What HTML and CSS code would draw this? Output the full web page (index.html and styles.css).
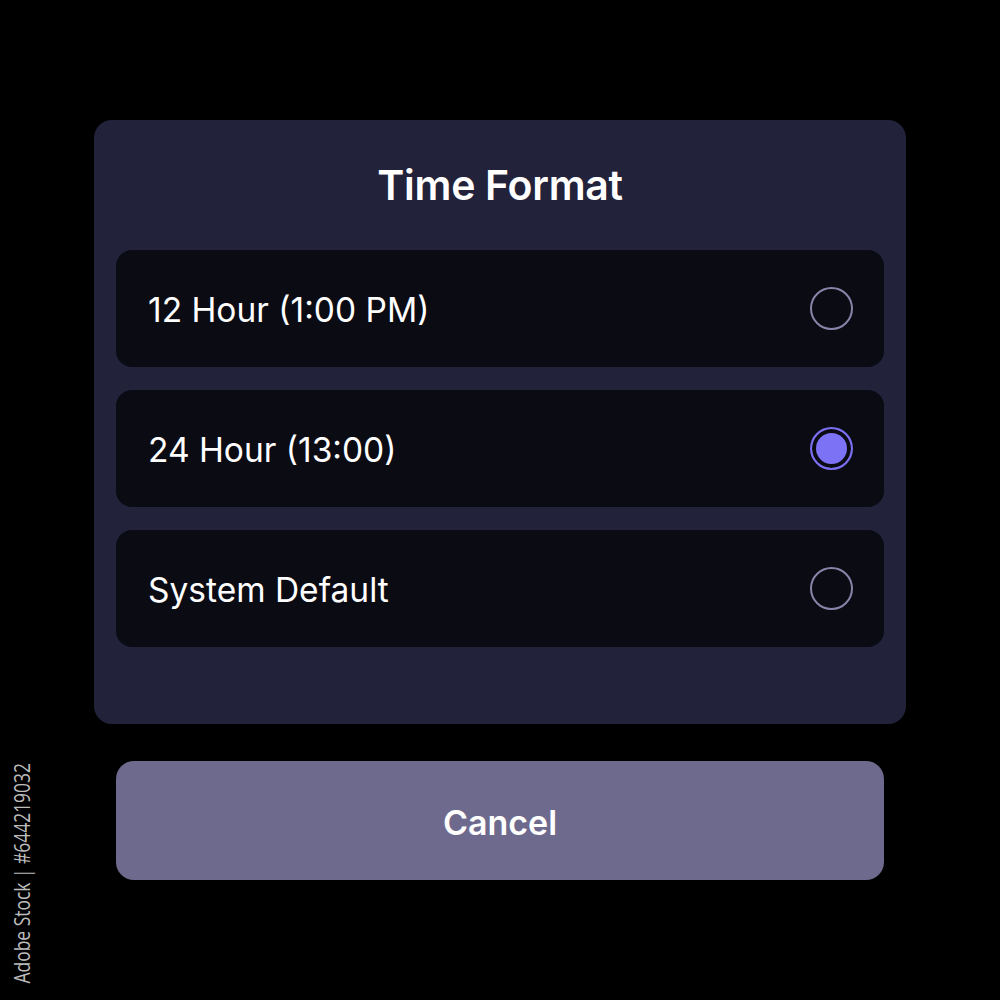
FILE: index.html
```html
<!DOCTYPE html>
<html>
<head>
  <title>Time Format</title>
  <link rel="stylesheet" href="styles.css">
</head>
<body>
  <div class="sheet">
    <div class="panel">
      <h1 class="title">Time Format</h1>
      <div class="options">
        <label class="option">
          <span class="label">12 Hour (1:00 PM)</span>
          <span class="radio"></span>
        </label>
        <label class="option">
          <span class="label">24 Hour (13:00)</span>
          <span class="radio checked"></span>
        </label>
        <label class="option">
          <span class="label">System Default</span>
          <span class="radio"></span>
        </label>
      </div>
    </div>
    <button class="cancel">Cancel</button>
  </div>
  <div class="stock-id">Adobe Stock | #644219032</div>
</body>
</html>
```

FILE: styles.css
```css
body {
  margin: 0;
  background: #000;
  font-family: Inter, "Noto Sans", sans-serif;
  color: #fff;
  min-height: 1000px;
  overflow: hidden;
}
.sheet {
  width: 812px;
  margin-left: 94px;
  padding-top: 120px;
  display: flex;
  flex-direction: column;
  align-items: center;
}
.panel {
  box-sizing: border-box;
  width: 100%;
  background: #22223a;
  border-radius: 18px;
  padding: 0 22px 77px;
}
.title {
  margin: 0;
  height: 130px;
  display: flex;
  align-items: center;
  justify-content: center;
  font-size: 41px;
  font-weight: 600;
  letter-spacing: -0.3px;
}
.options {
  display: flex;
  flex-direction: column;
  gap: 23px;
}
.option {
  height: 117px;
  background: #0b0b14;
  border-radius: 16px;
  display: flex;
  align-items: center;
  justify-content: space-between;
  padding: 0 32px;
}
.label {
  font-size: 33.5px;
  font-weight: 400;
  padding-top: 2px;
}
.radio {
  box-sizing: border-box;
  width: 43px;
  height: 43px;
  border-radius: 50%;
  border: 2px solid #8884a8;
  margin-right: -1px;
}
.radio.checked {
  border-color: #7b6ff0;
  background: #7c72f5;
  box-shadow: inset 0 0 0 4px #0b0b14;
}
.cancel {
  margin-top: 37px;
  width: 768px;
  height: 119px;
  border: none;
  border-radius: 18px;
  background: #6e6a8e;
  color: #fff;
  font-family: inherit;
  font-size: 34px;
  font-weight: 600;
  padding-top: 4px;
}
/* vertical stock id along the left edge */
.stock-id {
  position: absolute;
  left: 12px;
  top: 763px;
  transform: rotate(-90deg) scaleX(0.83) translateX(-100%);
  transform-origin: 0 0;
  white-space: nowrap;
  font-family: "Open Sans", sans-serif;
  font-size: 21px;
  color: #bdbdbd;
  line-height: 1;
}
```
